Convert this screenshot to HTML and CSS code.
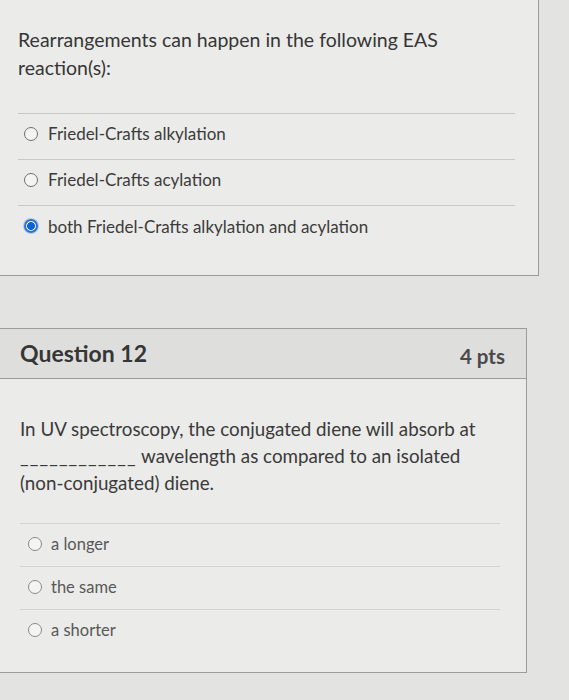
FILE: index.html
```html
<!DOCTYPE html>
<html>
<head>
<meta charset="utf-8">
<link rel="stylesheet" href="styles.css">
</head>
<body>
<div class="page">
  <section class="card card-a">
    <div class="q-text">Rearrangements can happen in the following EAS reaction(s):</div>
    <ul class="answers">
      <li class="answer"><span class="radio"></span><span>Friedel-Crafts alkylation</span></li>
      <li class="answer"><span class="radio"></span><span>Friedel-Crafts acylation</span></li>
      <li class="answer"><span class="radio checked"></span><span>both Friedel-Crafts alkylation and acylation</span></li>
    </ul>
  </section>

  <section class="card card-b">
    <header class="q-head">
      <span class="q-title">Question 12</span>
      <span class="q-pts">4 pts</span>
    </header>
    <div class="q-body">
      <div class="q-text2">In UV spectroscopy, the conjugated diene will absorb at <span class="blank">____________</span> wavelength as compared to an isolated (non-conjugated) diene.</div>
      <ul class="answers answers-b">
        <li class="answer"><span class="radio"></span><span>a longer</span></li>
        <li class="answer"><span class="radio"></span><span>the same</span></li>
        <li class="answer"><span class="radio"></span><span>a shorter</span></li>
      </ul>
    </div>
  </section>
</div>
</body>
</html>
```

FILE: styles.css
```css
* { box-sizing: border-box; }
html, body {
  margin: 0;
  padding: 0;
  background: #e3e4e2;
  font-family: Lato, "Liberation Sans", sans-serif;
  color: #3b3b3b;
}
.page {
  display: flex;
  flex-direction: column;
}
.card {
  background: #ebebe9;
  border: 1px solid #9c9c9a;
  border-left: none;
}
.card-a {
  width: 539px;
  height: 276px;
  border-top: none;
  padding: 26px 0 0 18px;
}
.q-text {
  font-size: 19.5px;
  line-height: 28px;
  width: 440px;
  color: #363636;
}
.answers {
  list-style: none;
  margin: 0;
  padding: 0;
}
.card-a .answers {
  margin-top: 31px;
  width: 497px;
  border-top: 1px solid #c9c9c7;
}
.answer {
  display: flex;
  align-items: center;
  gap: 10px;
  height: 46px;
  padding: 0 0 6px 6px;
  font-size: 17px;
  border-bottom: 1px solid #c9c9c7;
}
.card-a .answer:last-child { border-bottom: none; }
.radio {
  width: 14px;
  height: 14px;
  border-radius: 50%;
  border: 1.5px solid #707070;
  background: #f4f4f2;
  flex: none;
}
.radio.checked {
  border: 2px solid #2a6fd6;
  background: radial-gradient(circle, #0b63d8 0 3.6px, #f2f4f6 4.2px);
  box-shadow: 0 0 0 1px #b7c9e6;
}
.card-b {
  margin-top: 52px;
  width: 527px;
  height: 345px;
}
.q-head {
  display: flex;
  justify-content: space-between;
  align-items: center;
  height: 50px;
  padding: 0 21px 0 20px;
  background: #dedfdd;
  border-bottom: 1px solid #9c9c9a;
}
.q-title {
  font-size: 23px;
  font-weight: 700;
  color: #363636;
  padding-bottom: 2px;
}
.q-pts {
  font-size: 20.5px;
  font-weight: 700;
  color: #4a4a4a;
  padding-top: 4px;
}
.q-body {
  padding: 36px 0 0 20px;
}
.q-text2 {
  font-size: 18.8px;
  line-height: 27px;
  width: 465px;
  color: #3a3a3a;
}
.blank {
  display: inline-block;
  line-height: 16px;
  letter-spacing: 1.1px;
}
.answers-b {
  margin-top: 27px;
  width: 480px;
  border-top: 1px solid #d4d4d2;
}
.answers-b .answer {
  height: 43px;
  padding: 0 0 3px 8px;
  gap: 9px;
  font-size: 16.5px;
  color: #585858;
  border-bottom: 1px solid #d4d4d2;
}
.answers-b .answer:last-child { border-bottom: none; }
.answers-b .radio {
  border-color: #8a8a8a;
  width: 14px;
  height: 14px;
}
```
